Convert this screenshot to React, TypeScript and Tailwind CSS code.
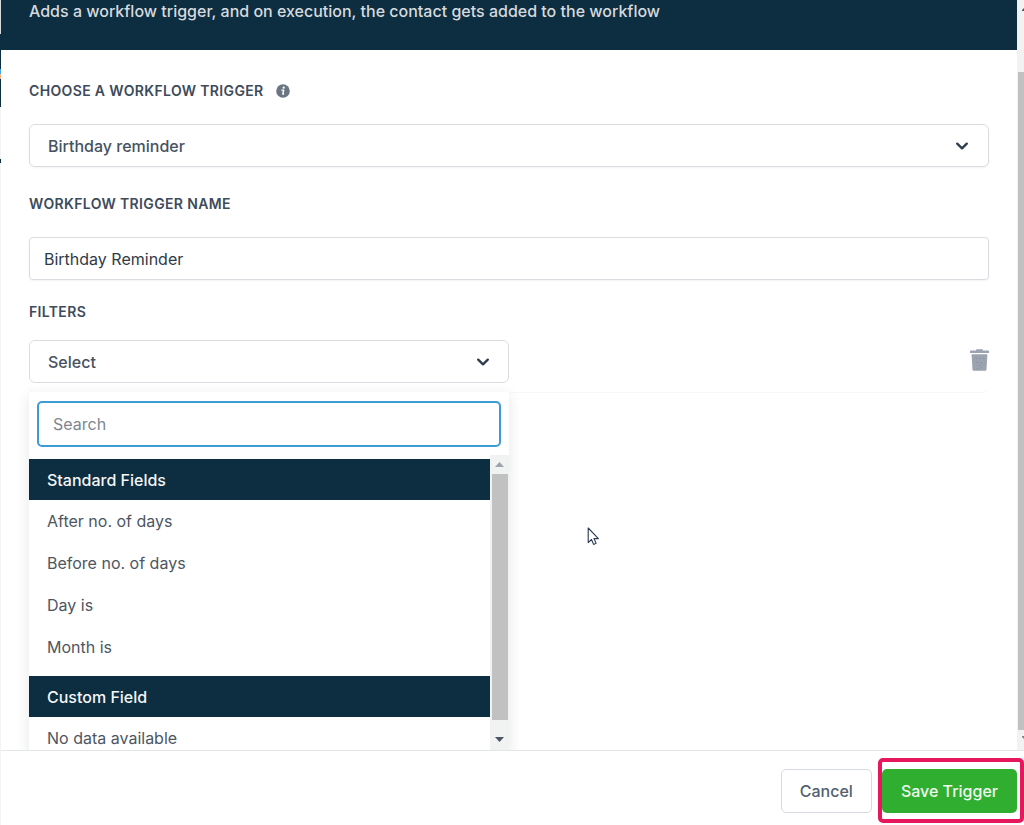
import { useState } from "react";

const standardFields = ["After no. of days", "Before no. of days", "Day is", "Month is"];

function Chevron() {
  return (
    <svg className="pointer-events-none h-3 w-3 shrink-0" viewBox="0 0 12 12" fill="none" aria-hidden="true">
      <path d="M1.2 3.6 6 8.4l4.8-4.8" stroke="#2f3e4f" strokeWidth="2.3" strokeLinecap="round" strokeLinejoin="round" />
    </svg>
  );
}

function InfoIcon() {
  return (
    <svg className="h-3.5 w-3.5" viewBox="0 0 14 14" aria-hidden="true">
      <circle cx="7" cy="7" r="6.8" fill="#6b7685" />
      <circle cx="7.7" cy="3.7" r="1.1" fill="#fff" />
      <path d="M5.4 6.1h2.3L6.8 10h1.3" stroke="#fff" strokeWidth="1.4" fill="none" strokeLinejoin="round" />
    </svg>
  );
}

function TrashIcon() {
  return (
    <svg className="h-[22px] w-[19px]" viewBox="0 0 19 22" fill="#9aa3af" aria-hidden="true">
      <path d="M6 1.2Q6 .2 7 .2h5q1 0 1 1V1.6h5.4q.6 0 .6.6v1.9H0V2.2q0-.6.6-.6H6z" />
      <path d="M1.6 5.3h15.8l-.9 15.1q-.1 1.4-1.5 1.4H4q-1.4 0-1.5-1.4z" />
      <g fill="#7f8996">
        <circle cx="6.4" cy="9.6" r=".5" />
        <circle cx="9.6" cy="9.6" r=".5" />
        <circle cx="13" cy="9.6" r=".5" />
        <circle cx="7.4" cy="13.4" r=".5" />
        <circle cx="11.4" cy="13.4" r=".5" />
        <circle cx="9.6" cy="16.4" r=".5" />
        <circle cx="14" cy="15.6" r=".5" />
        <circle cx="7.4" cy="19.4" r=".5" />
        <circle cx="11.4" cy="18.8" r=".5" />
      </g>
    </svg>
  );
}

function FieldsMenu() {
  const heading = "flex h-[41px] items-center bg-[#0d2d40] px-[18px] font-medium text-[#f3f5f6]";
  return (
    <div className="absolute -right-px -left-px top-[51px] z-10 rounded-b-md bg-white shadow-[0_4px_14px_rgba(30,50,60,0.12)]">
      <div className="px-2 pt-[9px] pb-2">
        <input
          type="text"
          aria-label="Search fields"
          placeholder="Search"
          className="h-[46px] w-full rounded-[5px] border-2 border-[#3c9cd7] bg-white px-3.5 text-base text-[#3b4756] outline-none placeholder:text-[#7d8590]"
        />
      </div>
      <div className="flex">
        <div className="min-w-0 flex-1 pt-1 text-base leading-6">
          <h3 className={heading}>Standard Fields</h3>
          <ul>
            {standardFields.map((field) => (
              <li key={field}>
                <button type="button" className="block h-[42px] w-full px-[18px] text-left text-[#4d5662]">
                  {field}
                </button>
              </li>
            ))}
          </ul>
          <h3 className={`mt-2 ${heading}`}>Custom Field</h3>
          <p className="flex h-[42px] items-center px-[18px] text-[#4d5662]">No data available</p>
        </div>
        <div className="flex w-[19px] flex-col items-center bg-[#f1f2f2]" aria-hidden="true">
          <svg className="my-[7px] h-[5px] w-[9px] shrink-0" viewBox="0 0 9 5">
            <path d="M4.5 0 9 5H0z" fill="#9ea4ab" />
          </svg>
          <div className="w-4 flex-1 bg-[#c1c1c1]" />
          <svg className="mt-[17px] mb-[17px] h-[5px] w-[9px] shrink-0" viewBox="0 0 9 5">
            <path d="M0 0h9L4.5 5z" fill="#4b5563" />
          </svg>
        </div>
      </div>
    </div>
  );
}

export default function App() {
  const [name, setName] = useState("Birthday Reminder");
  const [open, setOpen] = useState(true);
  const label = "text-sm leading-5 font-semibold uppercase tracking-wide text-[#3d4b5b]";

  return (
    <div className="flex h-screen overflow-hidden bg-white font-['Inter',sans-serif]">
      <div className="flex w-px shrink-0 flex-col bg-[#f3f4f6]" aria-hidden="true">
        <div className="h-[34px] bg-[#d5d9dc]" />
        <div className="h-[35px] bg-[#0d2d40]" />
        <div className="h-[5px] bg-[#49a5df]" />
        <div className="h-[5px] bg-[#f1b48f]" />
        <div className="h-7 bg-[#0d2d40]" />
        <div className="mt-[52px] h-1 bg-[#0d2d40]" />
      </div>

      <div className="relative flex min-w-0 flex-1 flex-col">
        <div className="flex min-h-0 flex-1 overflow-hidden">
          <main className="min-w-0 flex-1">
            <header className="h-[50px] bg-[#0d2d40] px-7">
              <p className="text-base leading-[22px] font-medium text-[#d5dade]">
                Adds a workflow trigger, and on execution, the contact gets added to the workflow
              </p>
            </header>

            <form className="px-7 pt-[31px]">
              <div className="flex items-center gap-3">
                <label htmlFor="trigger" className={label}>Choose a workflow trigger</label>
                <InfoIcon />
              </div>
              <div className="mt-[23px] grid items-center rounded-md border border-[#d9dde1] shadow-xs">
                <select
                  id="trigger"
                  className="col-start-1 row-start-1 h-[41px] w-full appearance-none rounded-md bg-transparent pr-12 pl-[18px] text-base font-medium text-[#465261] outline-none"
                >
                  <option>Birthday reminder</option>
                </select>
                <div className="pointer-events-none col-start-1 row-start-1 mr-5 justify-self-end">
                  <Chevron />
                </div>
              </div>

              <label htmlFor="trigger-name" className={`mt-[27px] block ${label}`}>Workflow trigger name</label>
              <input
                id="trigger-name"
                type="text"
                value={name}
                onChange={(e) => setName(e.target.value)}
                className="mt-[23px] block h-[43px] w-full rounded-[4px] border border-[#d9dde1] px-3.5 text-base text-[#2f3b49] shadow-xs outline-none"
              />

              <h2 id="filters" className={`mt-[22px] ${label}`}>Filters</h2>
              <div className="mt-[18px] flex items-start justify-between rounded-b-md border-b border-[#f6f7f7] pb-[9px]">
                <div className="relative w-1/2 rounded-md border border-[#d9dde1]">
                  <button
                    type="button"
                    aria-labelledby="filters"
                    aria-haspopup="listbox"
                    aria-expanded={open}
                    onClick={() => setOpen(!open)}
                    className="flex h-[41px] w-full items-center justify-between pr-[19px] pl-[18px] text-base font-medium text-[#465261]"
                  >
                    Select
                    <Chevron />
                  </button>
                  {open && <FieldsMenu />}
                </div>
                <button type="button" aria-label="Delete filter" className="mt-[9px]">
                  <TrashIcon />
                </button>
              </div>
            </form>
          </main>

          <div className="flex w-[7px] shrink-0 flex-col bg-[#f2f2f2]" aria-hidden="true">
            <svg className="mt-2 ml-[5px] h-[3px] w-0.5 shrink-0" viewBox="0 0 2 3">
              <path d="M0 2 2 0v3H0z" fill="#4b5563" />
            </svg>
            <div className="mt-[61px] ml-px flex-1 bg-[#c1c1c1]" />
            <svg className="mt-1.5 mb-[11px] ml-[5px] h-[3px] w-0.5 shrink-0" viewBox="0 0 2 3">
              <path d="M0 0h2v3L0 1z" fill="#7b828b" />
            </svg>
          </div>
        </div>

        <footer className="relative z-20 flex h-[75px] shrink-0 items-start justify-end gap-2.5 border-t border-[#e3e6e8] bg-white pt-[18px] pr-[7px]">
          <button type="button" className="h-11 rounded-[5px] border border-[#d5dae0] px-[18px] text-base font-medium text-[#526070]">
            Cancel
          </button>
          <div className="relative">
            <button type="button" className="h-11 rounded-[5px] bg-[#30ae30] px-[19px] text-base font-medium text-[#eef8ee]">
              Save Trigger
            </button>
            <div className="pointer-events-none absolute -top-[11px] -right-[7px] -bottom-[10px] -left-1 rounded-[5px] border-4 border-[#e6175c]" />
          </div>
        </footer>

        <svg className="pointer-events-none absolute top-[527px] left-[586px] z-30 h-[19px] w-[13px]" viewBox="0 0 13 19" aria-hidden="true">
          <path d="M1.2 1v14.6l3.3-3.1 2.1 4.9 2.5-1.1-2.1-4.7h4.4z" fill="#fff" stroke="#2b3a50" strokeWidth="1.1" strokeLinejoin="round" />
        </svg>
      </div>
    </div>
  );
}
